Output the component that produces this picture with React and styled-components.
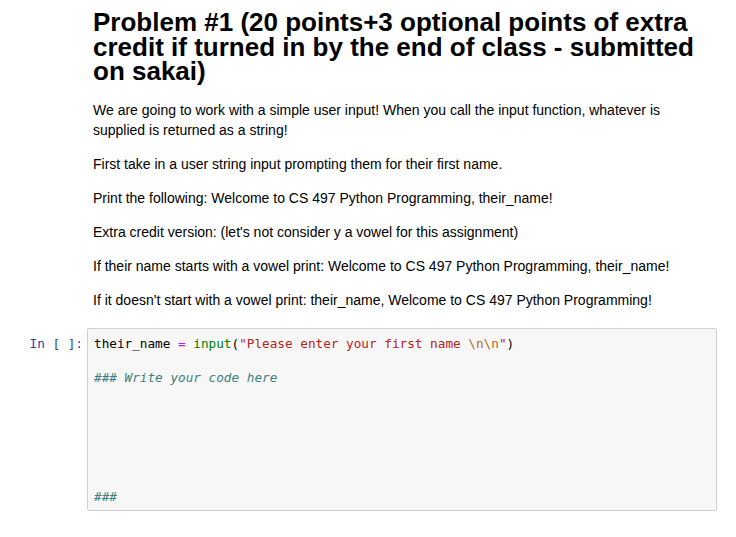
import React from "react";
import styled, { createGlobalStyle } from "styled-components";

const GlobalStyle = createGlobalStyle`
  body {
    margin: 0;
    background: #fff;
    font-family: "Liberation Sans", Arial, sans-serif;
    color: #000;
  }
`;

const Notebook = styled.div`
  width: 736px;
  padding-top: 10px;
`;

const Cell = styled.div`
  display: flex;
  align-items: flex-start;
  margin-top: ${({ gap }) => gap || 0}px;
`;

const Prompt = styled.div`
  width: 87px;
  flex: none;
  box-sizing: border-box;
  padding: 7px 4px 0 0;
  text-align: right;
  color: #303f9f;
  font-family: "DejaVu Sans Mono", "Liberation Mono", monospace;
  font-size: 12.7px;
  line-height: 17px;
  white-space: pre;
`;

const Markdown = styled.div`
  width: 618px;
  padding-left: 6px;
  font-size: 14px;
  line-height: 20px;
`;

const Title = styled.h1`
  margin: 0;
  font-size: 26px;
  line-height: 24.5px;
  font-weight: bold;
`;

const Para = styled.p`
  margin: ${({ first }) => (first ? "16.5px" : "14px")} 0 0 0;
`;

const InputArea = styled.div`
  width: 630px;
  height: 183px;
  box-sizing: border-box;
  border: 1px solid #cfcfcf;
  border-radius: 2px;
  background: #f7f7f7;
  padding: 6px 6px 0 6px;
`;

const Code = styled.pre`
  margin: 0;
  font-family: "DejaVu Sans Mono", "Liberation Mono", monospace;
  font-size: 12.7px;
  line-height: 17px;
  color: #000;
`;

const Tok = styled.span`
  color: ${({ c }) => c};
  font-style: ${({ italic }) => (italic ? "italic" : "normal")};
`;

const paragraphs = [
  "We are going to work with a simple user input! When you call the input function, whatever is supplied is returned as a string!",
  "First take in a user string input prompting them for their first name.",
  "Print the following: Welcome to CS 497 Python Programming, their_name!",
  "Extra credit version: (let's not consider y a vowel for this assignment)",
  "If their name starts with a vowel print: Welcome to CS 497 Python Programming, their_name!",
  "If it doesn't start with a vowel print: their_name, Welcome to CS 497 Python Programming!",
];

const App = () => {
  return (
    <Notebook>
      <GlobalStyle />
      <Cell>
        <Prompt />
        <Markdown>
          <Title>
            Problem #1 (20 points+3 optional points of extra credit if turned
            in by the end of class - submitted on sakai)
          </Title>
          {paragraphs.map((text, i) => (
            <Para key={i} first={i === 0}>
              {text}
            </Para>
          ))}
        </Markdown>
      </Cell>
      <Cell gap={18}>
        <Prompt>In [ ]:</Prompt>
        <InputArea>
          <Code>
            their_name <Tok c="#aa22ff">=</Tok> <Tok c="#008000">input</Tok>(
            <Tok c="#ba2121">"Please enter your first name </Tok>
            <Tok c="#bb6622">\n\n</Tok>
            <Tok c="#ba2121">"</Tok>){"\n"}
            {"\n"}
            <Tok c="#408080" italic>
              ### Write your code here
            </Tok>
            {"\n\n\n\n\n\n\n"}
            <Tok c="#408080" italic>
              ###
            </Tok>
          </Code>
        </InputArea>
      </Cell>
    </Notebook>
  );
};

export default App;
